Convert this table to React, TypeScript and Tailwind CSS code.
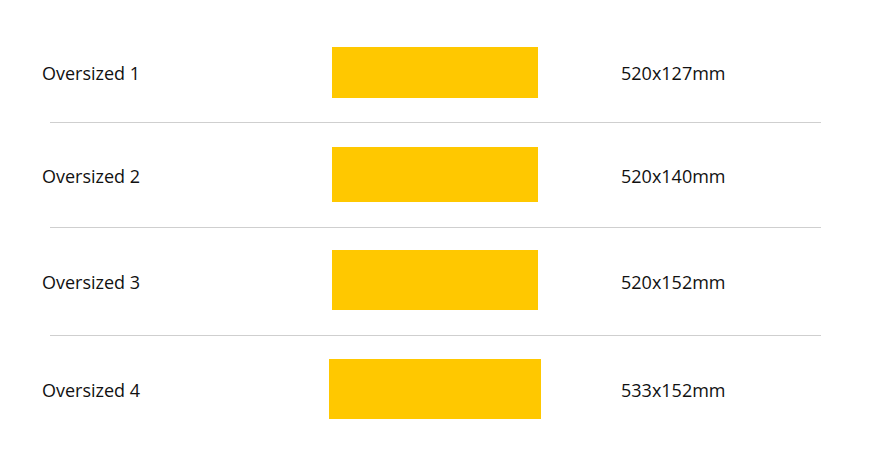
import React from 'react';

const rows = [
  { name: 'Oversized 1', size: '520x127mm', w: 'w-[206px]', h: 'h-[51px]', row: 'h-[100px]', nudge: 'mb-0' },
  { name: 'Oversized 2', size: '520x140mm', w: 'w-[206px]', h: 'h-[55px]', row: 'h-[104px]', nudge: 'mb-[2px]' },
  { name: 'Oversized 3', size: '520x152mm', w: 'w-[206px]', h: 'h-[60px]', row: 'h-[107px]', nudge: 'mb-[4px]' },
  { name: 'Oversized 4', size: '533x152mm', w: 'w-[212px]', h: 'h-[60px]', row: 'h-[106px]', nudge: 'mb-0' },
];

const App: React.FC = () => {
  return (
    <div
      className="w-[870px] h-[466px] bg-white pt-[22px] text-[#111] overflow-hidden"
      style={{ fontFamily: '"Open Sans", "Noto Sans", sans-serif' }}
    >
      {rows.map((r, i) => (
        <div key={r.name}>
          {i > 0 && <div className="ml-[50px] w-[771px] h-px bg-[#cfcfcf]" />}
          <div className={`flex items-center pl-[42px] ${r.row}`}>
            <span className="w-[287px] text-[18px] pt-[2px]">{r.name}</span>
            <div className="w-[212px] flex justify-center">
              <div className={`${r.w} ${r.h} ${r.nudge} bg-[#ffc800]`} />
            </div>
            <span className="ml-[80px] text-[18px] pt-[2px]">{r.size}</span>
          </div>
        </div>
      ))}
    </div>
  );
};

export default App;
